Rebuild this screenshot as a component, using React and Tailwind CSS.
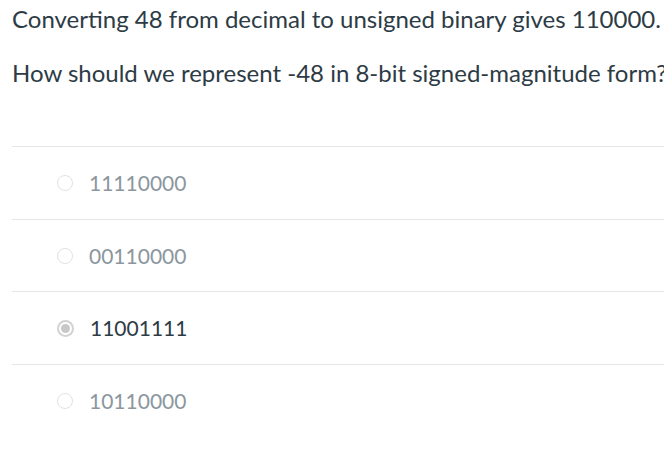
export default function App() {
  const opts = [
    { t: "11110000", sel: false, h: "h-[73px]" },
    { t: "00110000", sel: false, h: "h-[72px]" },
    { t: "11001111", sel: true, h: "h-[73px]" },
    { t: "10110000", sel: false, h: "h-[73px]" },
  ];
  return (
    <div className="w-[664px] h-[451px] bg-white overflow-hidden" style={{ fontFamily: "Lato, 'Noto Sans', sans-serif" }}>
      <div className="pl-3 pt-[5px] text-[#2d3b45] text-[24px] leading-[28px] whitespace-nowrap">
        <p>Converting 48 from decimal to unsigned binary gives 110000.</p>
        <p className="mt-[26px]">How should we represent -48 in 8-bit signed-magnitude form?</p>
      </div>
      <div className="ml-3 mt-[59px] w-[700px]">
        {opts.map((o, i) => (
          <div key={i} className={"border-t border-[#e6e6e6] flex items-center pl-[45px] " + o.h}>
            {o.sel ? (
              <span className="w-[17px] h-[17px] rounded-full border-[2px] border-[#d2d2d2] bg-white flex items-center justify-center">
                <span className="w-[9px] h-[9px] rounded-full bg-[#c8c8c8]" />
              </span>
            ) : (
              <span className="w-[16px] h-[16px] rounded-full border border-[#dfe2e4] bg-white" />
            )}
            <span className={"ml-[16px] text-[21px] " + (o.sel ? "text-[#2d3b45]" : "text-[#8b969e]")}>{o.t}</span>
          </div>
        ))}
      </div>
    </div>
  );
}
